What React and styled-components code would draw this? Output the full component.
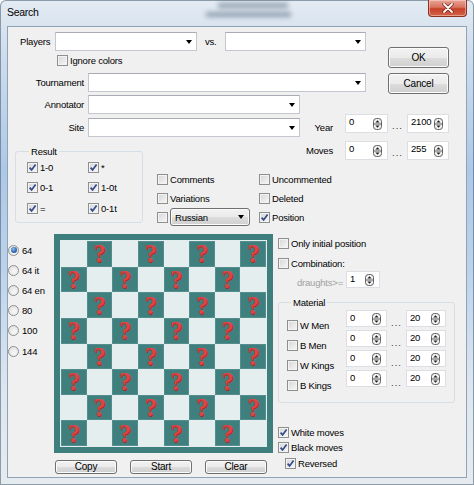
import React from 'react';
import styled, { createGlobalStyle } from 'styled-components';

const FONT = `"Liberation Sans", Arial, sans-serif`;

const GlobalStyle = createGlobalStyle`
  html, body {
    margin: 0;
    padding: 0;
    background: #fff;
    overflow: hidden;
  }
  body {
    font-family: ${FONT};
    font-size: 9.5px;
    letter-spacing: -0.2px;
    color: #000;
  }
  * {
    box-sizing: border-box;
  }
`;

const Window = styled.div`
  width: 474px;
  height: 485px;
  display: flex;
  flex-direction: column;
  background: linear-gradient(180deg, #e3ebf3 0%, #cddcec 12%, #adc8e6 35%, #bcd2ea 55%, #dde6ef 80%, #e6ebf0 100%);
  border-radius: 6px 6px 0 0;
  box-shadow: inset 0 0 0 1px rgba(70, 90, 110, 0.55);
`;

const TitleBar = styled.div`
  height: 26px;
  flex: none;
  display: flex;
  align-items: flex-start;
  padding: 0 7px;
  overflow: hidden;
`;

const Title = styled.span`
  margin-top: 6px;
  font-size: 10.5px;
  letter-spacing: -0.3px;
  line-height: 13px;
`;

const Ghost = styled.div`
  margin: 3px 0 0 168px;
  display: flex;
  flex-direction: column;
  gap: 4px;
  filter: blur(2.5px);
  opacity: 0.45;
`;

const GhostBar = styled.span`
  display: block;
  height: 5px;
  width: ${({ $w }) => $w}px;
  margin-left: ${({ $ml }) => $ml ?? 0}px;
  background: #34495e;
`;

const CloseButton = styled.div`
  margin-left: auto;
  width: 39px;
  height: 17px;
  display: flex;
  align-items: center;
  justify-content: center;
  border: 1px solid #8d2f22;
  border-top: none;
  border-radius: 0 0 4px 4px;
  background: linear-gradient(180deg, #e9a596 0%, #d9735f 45%, #c7402a 55%, #d2634a 100%);
  box-shadow: inset 0 0 0 1px rgba(255, 220, 210, 0.5);
`;

const Client = styled.div`
  flex: 1;
  margin: 0 7px 7px 7px;
  background: #f0f0f0;
  border: 1px solid #8fa3b8;
  display: flex;
  flex-direction: column;
`;

/* ---------- controls ---------- */

const CheckRow = styled.label`
  display: flex;
  align-items: center;
  gap: 2px;
  height: 13px;
  line-height: 13px;
  white-space: nowrap;
  flex: none;
  width: ${({ $w }) => ($w ? `${$w}px` : 'auto')};
  margin-top: ${({ $mt }) => $mt ?? 0}px;
  margin-left: ${({ $ml }) => $ml ?? 0}px;
`;

const Box = styled.span`
  width: 11px;
  height: 11px;
  flex: none;
  display: flex;
  align-items: center;
  justify-content: center;
  border: 1px solid #8e8f8f;
  background: linear-gradient(135deg, #d6d6d6 0%, #f7f7f7 100%);
  box-shadow: inset 0 0 0 1px #f3f3f3;
`;

const Check = ({ checked, children, ...rest }) => (
  <CheckRow {...rest}>
    <Box>
      {checked && (
        <svg width="9" height="9" viewBox="0 0 9 9">
          <path d="M1.6 4.6 L3.6 6.9 L7.6 1.6" fill="none" stroke="#34498a" strokeWidth="1.7" />
        </svg>
      )}
    </Box>
    {children && <span>{children}</span>}
  </CheckRow>
);

const RadioRow = styled.label`
  display: flex;
  align-items: center;
  gap: 3px;
  height: 20.2px;
  white-space: nowrap;
`;

const RadioDot = styled.span`
  width: 11px;
  height: 11px;
  border-radius: 50%;
  flex: none;
  display: flex;
  align-items: center;
  justify-content: center;
  border: 1px solid #8e8f8f;
  background: radial-gradient(circle at 60% 65%, #f8f8f8 0%, #dcdcdc 100%);

  &::after {
    content: '';
    display: ${({ $on }) => ($on ? 'block' : 'none')};
    width: 6px;
    height: 6px;
    border-radius: 50%;
    background: radial-gradient(circle at 40% 35%, #8cc0f0 0%, #2a64a8 60%, #123d78 100%);
  }
`;

const Radio = ({ on, children }) => (
  <RadioRow>
    <RadioDot $on={on} />
    <span>{children}</span>
  </RadioRow>
);

const ComboBox = styled.div`
  width: ${({ $w }) => $w}px;
  height: 19px;
  flex: none;
  margin-top: ${({ $mt }) => $mt ?? 0}px;
  background: #fff;
  border: 1px solid #c4c7cf;
  border-top-color: #a9acb5;
  display: flex;
  align-items: center;
  justify-content: flex-end;
  padding-right: 4px;
`;

const Arrow = styled.span`
  width: 0;
  height: 0;
  border-left: 3.5px solid transparent;
  border-right: 3.5px solid transparent;
  border-top: 4px solid #000;
`;

const Combo = ({ w, mt }) => (
  <ComboBox $w={w} $mt={mt}>
    <Arrow />
  </ComboBox>
);

const DropButton = styled.div`
  width: 80px;
  height: 18px;
  margin-left: 2px;
  display: flex;
  align-items: center;
  justify-content: space-between;
  padding: 0 5px 0 4px;
  border: 1px solid #707070;
  border-radius: 3px;
  background: linear-gradient(180deg, #f2f2f2 0%, #ebebeb 50%, #dddddd 51%, #cfcfcf 100%);
  box-shadow: inset 0 0 0 1px #fbfbfb;
`;

const SpinBox = styled.div`
  width: ${({ $w }) => $w}px;
  height: ${({ $h }) => $h}px;
  flex: none;
  background: #fff;
  border: 1px solid #dcdee3;
  display: flex;
  align-items: flex-start;
  justify-content: space-between;
  padding: 0 5px 0 3px;
  line-height: 14px;
`;

const SpinGlyph = styled.svg`
  flex: none;
  align-self: center;
`;

const Spin = ({ w, h = 19, value }) => (
  <SpinBox $w={w} $h={h}>
    <span>{value}</span>
    <SpinGlyph width="9" height="12" viewBox="0 0 9 12">
      <rect x="0.5" y="0.5" width="8" height="11" rx="3" fill="#f1f1f1" stroke="#5e5e5e" />
      <line x1="1" y1="6" x2="8" y2="6" stroke="#5e5e5e" />
      <path d="M2.4 4.6 L4.5 2.3 L6.6 4.6Z" fill="#1e1e1e" />
      <path d="M2.4 7.4 L4.5 9.7 L6.6 7.4Z" fill="#1e1e1e" />
    </SpinGlyph>
  </SpinBox>
);

const Dots = styled.span`
  width: ${({ $w }) => $w ?? 19}px;
  flex: none;
  text-align: center;
  letter-spacing: 1px;
  margin-top: ${({ $mt }) => $mt ?? 6}px;
  color: #333;
`;

const Button = styled.button`
  width: ${({ $w }) => $w}px;
  height: ${({ $h }) => $h}px;
  flex: none;
  padding: 0;
  font-family: ${FONT};
  font-size: 10px;
  letter-spacing: -0.2px;
  line-height: 1;
  color: #000;
  border: 1px solid #707070;
  border-radius: 3px;
  background: linear-gradient(180deg, #f2f2f2 0%, #ebebeb 50%, #dddddd 51%, #cfcfcf 100%);
  box-shadow: inset 0 0 0 1px #fcfcfc;
`;

const Group = styled.fieldset`
  margin: ${({ $mt }) => $mt}px 0 0 ${({ $ml }) => $ml ?? 0}px;
  width: ${({ $w }) => $w}px;
  min-width: 0;
  padding: ${({ $pad }) => $pad};
  border: 1px solid #d5dfe5;
  border-radius: 3px;
`;

const Legend = styled.legend`
  padding: 0 2px;
  margin-left: ${({ $ml }) => $ml}px;
  line-height: 11px;
`;

/* ---------- top block ---------- */

const HeadBlock = styled.div`
  display: flex;
  padding-top: 5px;
`;

const FieldsCol = styled.div`
  display: flex;
  flex-direction: column;
`;

const FieldRow = styled.div`
  display: flex;
  align-items: ${({ $align }) => $align || 'center'};
  height: ${({ $h }) => $h ?? 19}px;
  margin-top: ${({ $mt }) => $mt ?? 0}px;
  flex: none;
`;

const FieldLabel = styled.span`
  width: ${({ $w }) => $w}px;
  flex: none;
  text-align: ${({ $left }) => ($left ? 'left' : 'right')};
  padding: ${({ $left }) => ($left ? '0 0 0 12px' : '0 4px 0 0')};
  margin-top: ${({ $mt }) => $mt ?? 0}px;
  line-height: 19px;
  white-space: nowrap;
`;

const VsLabel = styled.span`
  width: 28px;
  padding-left: 8px;
  flex: none;
`;

const ButtonCol = styled.div`
  margin-left: auto;
  margin-right: 17px;
  padding-top: 15px;
  display: flex;
  flex-direction: column;
  gap: 5px;
`;

const SpinPair = styled.div`
  display: flex;
  align-items: flex-start;
  margin-left: auto;
  margin-right: ${({ $mr }) => $mr ?? 17}px;
  margin-top: ${({ $mt }) => $mt ?? 0}px;
  flex: none;
`;

const SpinLabel = styled.span`
  width: 30px;
  margin-right: 12px;
  margin-top: ${({ $mt }) => $mt ?? 0}px;
  text-align: right;
  line-height: 19px;
`;

/* ---------- middle block ---------- */

const MiddleBlock = styled.div`
  display: flex;
  align-items: flex-start;
`;

const ResultGrid = styled.div`
  display: grid;
  grid-template-columns: 61px auto;
  grid-auto-rows: 20.5px;
  align-items: center;
`;

const OptionsArea = styled.div`
  flex: 1;
  margin-left: 14px;
  padding-right: 17px;
  display: flex;
  flex-direction: column;
`;

const OptionsGrid = styled.div`
  margin-top: 9.5px;
  display: grid;
  grid-template-columns: 102px auto;
  grid-auto-rows: 19px;
  align-items: center;
`;

const Inline = styled.div`
  display: flex;
  align-items: center;
`;

/* ---------- lower block ---------- */

const LowerBlock = styled.div`
  display: flex;
  margin-top: 7.5px;
`;

const RadioCol = styled.div`
  width: 46px;
  flex: none;
  padding-top: 6px;
  display: flex;
  flex-direction: column;
`;

const BoardCol = styled.div`
  width: 219px;
  flex: none;
  display: flex;
  flex-direction: column;
`;

const Board = styled.div`
  width: 219px;
  height: 219px;
  border: 6px solid #3e7e7d;
  padding: 1px;
  background: #e4eeee;
  display: grid;
  grid-template-columns: repeat(8, 1fr);
  grid-template-rows: repeat(8, 1fr);
`;

const Cell = styled.div`
  background: ${({ $dark }) => ($dark ? '#3f7f7e' : '#e4eeee')};
  box-shadow: ${({ $dark }) => ($dark ? 'inset 0 0 0 1px rgba(120, 170, 170, 0.35)' : 'none')};
  display: flex;
  align-items: center;
  justify-content: center;
  overflow: hidden;
`;

const QMark = styled.span`
  font-family: "Liberation Serif", serif;
  font-weight: bold;
  font-size: 25px;
  letter-spacing: 0;
  line-height: 1;
  color: #e04343;
  text-shadow: 1px 1px 0 #a72b2b;
`;

const BoardButtons = styled.div`
  display: flex;
  justify-content: space-between;
  margin-top: 7px;
  padding: 0 6px 0 1px;
`;

const RightCol = styled.div`
  width: 177px;
  margin-left: 5px;
  flex: none;
  display: flex;
  flex-direction: column;
`;

const DraughtsRow = styled.div`
  display: flex;
  align-items: flex-end;
  margin-top: 1.5px;
  height: 17px;
`;

const GrayLabel = styled.span`
  width: 65px;
  margin-right: 3px;
  text-align: right;
  color: #a0a0a0;
  line-height: 13px;
  margin-bottom: -1px;
`;

const MaterialRow = styled.div`
  display: flex;
  align-items: flex-start;
  height: 20px;
`;

const results = [
  ['1-0', '*'],
  ['0-1', '1-0t'],
  ['=', '0-1t'],
];

const materials = ['W Men', 'B Men', 'W Kings', 'B Kings'];
const radios = ['64', '64 it', '64 en', '80', '100', '144'];

export default function App() {
  const cells = [];
  for (let r = 0; r < 8; r++) {
    for (let c = 0; c < 8; c++) {
      const dark = (r + c) % 2 === 1;
      cells.push(
        <Cell key={`${r}-${c}`} $dark={dark}>
          {dark && <QMark>?</QMark>}
        </Cell>
      );
    }
  }

  return (
    <>
      <GlobalStyle />
      <Window>
        <TitleBar>
          <Title>Search</Title>
          <Ghost>
            <GhostBar $w={70} $ml={12} />
            <GhostBar $w={85} />
          </Ghost>
          <CloseButton>
            <svg width="12" height="10" viewBox="0 0 12 10">
              <path d="M2 1 L10 9 M10 1 L2 9" stroke="#7a2418" strokeWidth="3.4" strokeLinecap="round" />
              <path d="M2 1 L10 9 M10 1 L2 9" stroke="#fff" strokeWidth="1.8" strokeLinecap="round" />
            </svg>
          </CloseButton>
        </TitleBar>

        <Client>
          <HeadBlock>
            <FieldsCol>
              <FieldRow>
                <FieldLabel $w={47} $left>Players</FieldLabel>
                <Combo w={142} />
                <VsLabel>vs.</VsLabel>
                <Combo w={141} />
              </FieldRow>
              <Check $ml={49} $mt={3}>Ignore colors</Check>
              <FieldRow $mt={6}>
                <FieldLabel $w={80}>Tournament</FieldLabel>
                <Combo w={278} />
              </FieldRow>
            </FieldsCol>
            <ButtonCol>
              <Button $w={61} $h={21}>OK</Button>
              <Button $w={61} $h={21}>Cancel</Button>
            </ButtonCol>
          </HeadBlock>

          <FieldRow $mt={1}>
            <FieldLabel $w={80}>Annotator</FieldLabel>
            <Combo w={212} />
          </FieldRow>

          <FieldRow $h={23} $align="flex-start">
            <FieldLabel $w={80} $mt={4}>Site</FieldLabel>
            <Combo w={212} mt={4} />
            <SpinPair>
              <SpinLabel $mt={4}>Year</SpinLabel>
              <Spin w={43} value="0" />
              <Dots>...</Dots>
              <Spin w={42} value="2100" />
            </SpinPair>
          </FieldRow>

          <MiddleBlock>
            <Group $mt={9} $ml={7} $w={128} $pad="0 0 3px 11px">
              <Legend $ml={2}>Result</Legend>
              <ResultGrid>
                {results.map(([a, b]) => (
                  <React.Fragment key={a}>
                    <Check checked>{a}</Check>
                    <Check checked>{b}</Check>
                  </React.Fragment>
                ))}
              </ResultGrid>
            </Group>

            <OptionsArea>
              <SpinPair $mr={0} $mt={4}>
                <SpinLabel>Moves</SpinLabel>
                <Spin w={43} value="0" />
                <Dots>...</Dots>
                <Spin w={42} value="255" />
              </SpinPair>
              <OptionsGrid>
                <Check>Comments</Check>
                <Check>Uncommented</Check>
                <Check>Variations</Check>
                <Check>Deleted</Check>
                <Inline>
                  <Check />
                  <DropButton>
                    <span>Russian</span>
                    <Arrow />
                  </DropButton>
                </Inline>
                <Check checked>Position</Check>
              </OptionsGrid>
            </OptionsArea>
          </MiddleBlock>

          <LowerBlock>
            <RadioCol>
              {radios.map((r, i) => (
                <Radio key={r} on={i === 0}>{r}</Radio>
              ))}
            </RadioCol>

            <BoardCol>
              <Board>{cells}</Board>
              <BoardButtons>
                <Button $w={62} $h={14}>Copy</Button>
                <Button $w={62} $h={14}>Start</Button>
                <Button $w={62} $h={14}>Clear</Button>
              </BoardButtons>
            </BoardCol>

            <RightCol>
              <Check $mt={2.5}>Only initial position</Check>
              <Check $mt={7}>Combination:</Check>
              <DraughtsRow>
                <GrayLabel>draughts&gt;=</GrayLabel>
                <Spin w={34} h={17} value="1" />
              </DraughtsRow>

              <Group $mt={8.5} $w={177} $pad="2.5px 0 12px 8px">
                <Legend $ml={4}>Material</Legend>
                {materials.map((m) => (
                  <MaterialRow key={m}>
                    <Check $w={59} $mt={9}>{m}</Check>
                    <Spin w={41} h={17} value="0" />
                    <Dots $mt={7}>...</Dots>
                    <Spin w={40} h={17} value="20" />
                  </MaterialRow>
                ))}
              </Group>

              <Check checked $mt={22.5}>White moves</Check>
              <Check checked $mt={2}>Black moves</Check>
              <Check checked $mt={3} $ml={7}>Reversed</Check>
            </RightCol>
          </LowerBlock>
        </Client>
      </Window>
    </>
  );
}
